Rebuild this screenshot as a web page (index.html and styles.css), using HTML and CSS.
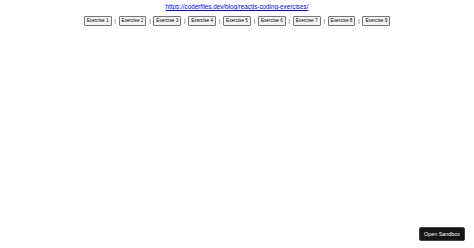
FILE: index.html
```html
<!DOCTYPE html>
<html lang="en">
<head>
  <meta charset="UTF-8" />
  <meta name="viewport" content="width=device-width, initial-scale=1.0"/>
  <title>React Coding Exercises</title>
  <link rel="stylesheet" href="styles.css">
</head>
<body>
  <div class="app">
    <div class="link-row">
      <a class="blog-link" href="#">https://coderfiles.dev/blog/reactjs-coding-exercises/</a>
    </div>
    <nav class="exercise-nav">
      <button>Exercise 1</button><span class="sep">|</span>
      <button>Exercise 2</button><span class="sep">|</span>
      <button>Exercise 3</button><span class="sep">|</span>
      <button>Exercise 4</button><span class="sep">|</span>
      <button>Exercise 5</button><span class="sep">|</span>
      <button>Exercise 6</button><span class="sep">|</span>
      <button>Exercise 7</button><span class="sep">|</span>
      <button>Exercise 8</button><span class="sep">|</span>
      <button>Exercise 9</button>
    </nav>
  </div>
  <button class="sandbox-btn">Open Sandbox</button>
</body>
</html>
```

FILE: styles.css
```css
body {
  margin: 0;
  font-family: 'Liberation Sans', Arial, sans-serif;
  background: #fff;
  color: #000;
  min-height: 100vh;
}

.app {
  text-align: center;
  padding-top: 3px;
}

.link-row {
  font-size: 6.3px;
  line-height: 8px;
}

.blog-link {
  color: #0000ee;
}

.exercise-nav {
  display: flex;
  justify-content: center;
  align-items: center;
  gap: 2.75px;
  margin-top: 5px;
}

.exercise-nav button {
  font-family: inherit;
  font-size: 4.7px;
  line-height: 6px;
  padding: 1px 2px;
  border: 1px solid #767676;
  border-radius: 1px;
  background: #f4f4f4;
  color: #000;
  margin: 0;
}

.sep {
  font-size: 5.6px;
  line-height: 6px;
  color: #333;
}

.sandbox-btn {
  position: fixed;
  right: 9px;
  bottom: 7px;
  background: #151515;
  color: #fff;
  border: 1px solid #444;
  border-radius: 2px;
  font-family: inherit;
  font-size: 5.4px;
  line-height: 8px;
  padding: 2px 4px;
}
```
